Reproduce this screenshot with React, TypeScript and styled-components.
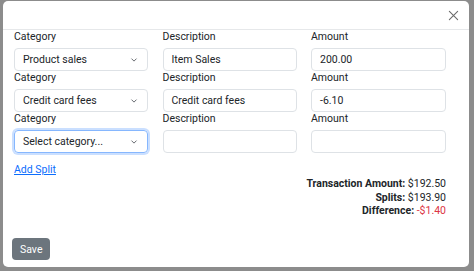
import React from "react";
import styled, { createGlobalStyle } from "styled-components";

const GlobalStyle = createGlobalStyle`
  html, body {
    margin: 0;
    padding: 0;
    background: #8c8c8c;
    font-family: Roboto, "Liberation Sans", Arial, sans-serif;
    color: #212529;
  }
`;

type Split = { category: string; description: string; amount: string };

const splits: Split[] = [
  { category: "Product sales", description: "Item Sales", amount: "200.00" },
  { category: "Credit card fees", description: "Credit card fees", amount: "-6.10" },
  { category: "", description: "", amount: "" },
];

const Chevron = () => (
  <svg width="8" height="6" viewBox="0 0 16 16" fill="none">
    <path d="M2 5l6 6 6-6" stroke="#343a40" strokeWidth="2" strokeLinecap="round" strokeLinejoin="round" />
  </svg>
);

const CloseIcon = () => (
  <svg width="11" height="11" viewBox="0 0 16 16" fill="none">
    <path d="M2 2l12 12M14 2L2 14" stroke="#6c6c6c" strokeWidth="1.6" strokeLinecap="round" />
  </svg>
);

export default function App() {
  return (
    <>
      <GlobalStyle />
      <Backdrop>
        <Modal>
          <Header>
            <CloseButton aria-label="Close">
              <CloseIcon />
            </CloseButton>
          </Header>
          <Body>
            {splits.map((s, i) => (
              <Row key={i}>
                <Field>
                  <Label>Category</Label>
                  <Select focused={i === 2}>
                    <span>{s.category || "Select category..."}</span>
                    <Chevron />
                  </Select>
                </Field>
                <Field>
                  <Label>Description</Label>
                  <Input>{s.description}</Input>
                </Field>
                <Field>
                  <Label>Amount</Label>
                  <Input>{s.amount}</Input>
                </Field>
              </Row>
            ))}
            <AddLink href="#">Add Split</AddLink>
            <Summary>
              <Line>
                <b>Transaction Amount:</b> $192.50
              </Line>
              <Line>
                <b>Splits:</b> $193.90
              </Line>
              <Line>
                <b>Difference:</b> <Negative>-$1.40</Negative>
              </Line>
            </Summary>
          </Body>
          <Footer>
            <SaveButton>Save</SaveButton>
          </Footer>
        </Modal>
      </Backdrop>
    </>
  );
}

const Backdrop = styled.div`
  width: 474px;
  height: 271px;
  padding: 1px 5px 4px 3px;
  box-sizing: border-box;
`;

const Modal = styled.div`
  width: 100%;
  height: 100%;
  background: #fff;
  border-radius: 5px;
  display: flex;
  flex-direction: column;
  overflow: hidden;
`;

const Header = styled.div`
  height: 28px;
  flex-shrink: 0;
  border-bottom: 1px solid #e6e8ea;
  display: flex;
  align-items: center;
  justify-content: flex-end;
  padding-right: 6px;
`;

const CloseButton = styled.button`
  border: none;
  background: none;
  padding: 4px;
  display: flex;
  cursor: pointer;
`;

const Body = styled.div`
  padding: 0 23px 0 11px;
  display: flex;
  flex-direction: column;
`;

const Row = styled.div`
  display: grid;
  grid-template-columns: 134px 134px 135px;
  column-gap: 14.5px;
`;

const Field = styled.div`
  display: flex;
  flex-direction: column;
`;

const Label = styled.label`
  font-size: 10.5px;
  line-height: 14px;
  margin-bottom: 4px;
`;

const Select = styled.div<{ focused?: boolean }>`
  height: 23px;
  box-sizing: border-box;
  border: 1px solid ${(p) => (p.focused ? "#86b7fe" : "#dee2e6")};
  box-shadow: ${(p) => (p.focused ? "0 0 0 2px rgba(13,110,253,0.22)" : "none")};
  border-radius: 4px;
  padding: 0 9px 0 8px;
  display: flex;
  align-items: center;
  justify-content: space-between;
  font-size: 10.5px;
`;

const Input = styled.div`
  height: 23px;
  box-sizing: border-box;
  border: 1px solid #dee2e6;
  border-radius: 4px;
  padding: 0 8px;
  display: flex;
  align-items: center;
  font-size: 10.5px;
`;

const AddLink = styled.a`
  align-self: flex-start;
  margin-top: 10px;
  font-size: 10.5px;
  line-height: 14px;
  color: #0d6efd;
  text-decoration: underline;
`;

const Summary = styled.div`
  display: flex;
  flex-direction: column;
  align-items: flex-end;
`;

const Line = styled.div`
  font-size: 10.5px;
  line-height: 13.7px;
  b {
    font-weight: 700;
  }
`;

const Negative = styled.span`
  color: #dc3545;
`;

const Footer = styled.div`
  margin-top: auto;
  padding: 0 0 7px 9px;
`;

const SaveButton = styled.button`
  background: #6c757d;
  color: #fff;
  border: none;
  border-radius: 4px;
  height: 22px;
  padding: 0 8px;
  font-family: Roboto, "Liberation Sans", Arial, sans-serif;
  font-size: 10.5px;
`;
